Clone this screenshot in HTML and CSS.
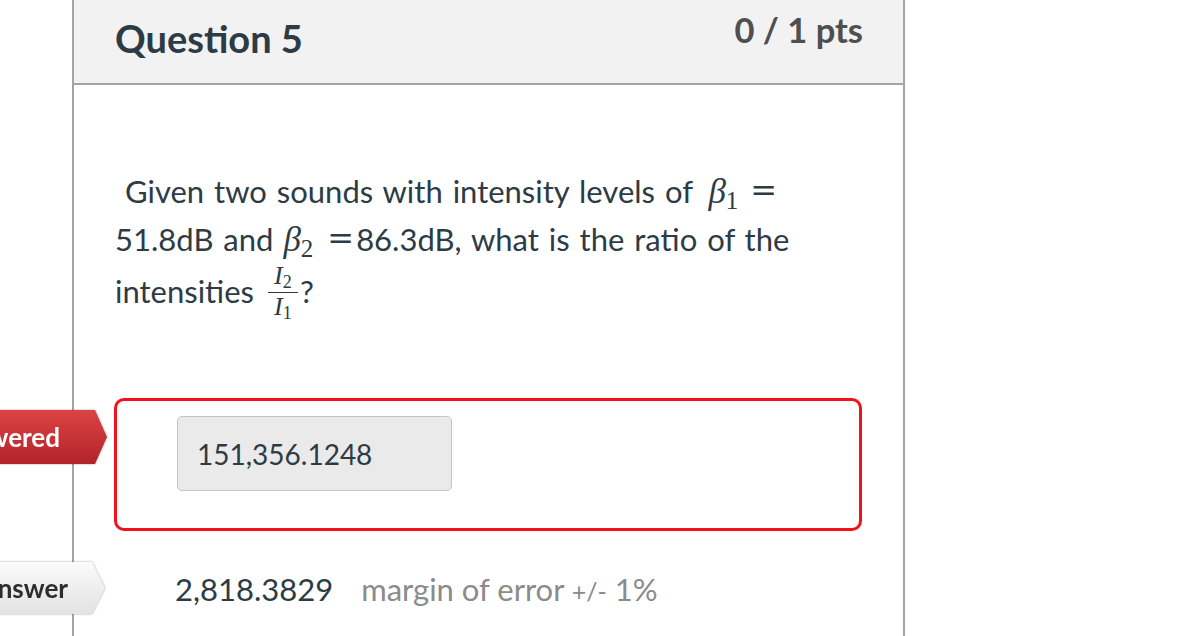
FILE: index.html
```html
<!DOCTYPE html>
<html>
<head>
<meta charset="utf-8">
<link rel="stylesheet" href="styles.css">
</head>
<body>
<div class="page">
  <div class="card">
    <div class="card-header">
      <h2 class="q-title">Question 5</h2>
      <div class="q-points">0 / 1 pts</div>
    </div>
    <div class="card-body">
      <p class="q-text">&nbsp;Given two sounds with intensity levels of <span class="math math-first"><span class="mi">β</span><span class="sub">1</span><span class="mo mo-gap">=</span></span><br>51.8dB and <span class="math"><span class="mi">β</span><span class="sub">2</span><span class="mo mo-gap2">=</span></span>86.3dB, what is the ratio of the<br>intensities <span class="frac"><span class="num"><span class="fi">I</span><span class="fsub">2</span></span><span class="den"><span class="fi">I</span><span class="fsub">1</span></span></span>?</p>

      <div class="answer-row">
        <div class="flag flag-wrong"><span class="flag-shape">You Answered</span></div>
        <div class="answer-box">
          <div class="answer-input">151,356.1248</div>
        </div>
      </div>

      <div class="correct-row">
        <div class="flag flag-correct"><span class="flag-shape">Correct Answer</span></div>
        <span class="correct-value">2,818.3829</span>
        <span class="margin-note">margin of error <span class="pm">+/-</span> 1%</span>
      </div>
    </div>
  </div>
</div>
</body>
</html>
```

FILE: styles.css
```css
* { box-sizing: border-box; }
html, body {
  margin: 0;
  padding: 0;
  background: #ffffff;
}
body {
  font-family: Lato, "Open Sans", "Liberation Sans", sans-serif;
  color: #2d3b45;
}
.page {
  width: 1194px;
  height: 636px;
  overflow: hidden;
}
.card {
  margin-left: 72px;
  width: 833px;
  height: 700px;
  border-left: 2px solid #a5a5a5;
  border-right: 2px solid #a5a5a5;
}
.card-header {
  height: 85px;
  background: #f2f2f2;
  border-bottom: 2px solid #a5a5a5;
  display: flex;
  justify-content: space-between;
  align-items: flex-start;
  padding: 0 40px 0 41px;
}
.q-title {
  margin: 0;
  padding-top: 15px;
  font-size: 38px;
  line-height: 46px;
  font-weight: 700;
  color: #2d3b45;
}
.q-points {
  padding-top: 9px;
  font-size: 34.5px;
  line-height: 42px;
  font-weight: 700;
  color: #4f4f4f;
}
.card-body {
  padding: 82px 40px 0 41px;
}
.q-text {
  margin: 0;
  font-size: 31px;
  line-height: 48px;
  word-spacing: 2px;
  color: #2d3b45;
}
.math {
  font-family: "Liberation Serif", "DejaVu Serif", serif;
  font-size: 35px;
  line-height: 1;
  white-space: nowrap;
  word-spacing: 0;
}
.math-first { margin-left: 6px; }
.mi { font-style: italic; }
.sub {
  font-size: 25px;
  position: relative;
  top: 6px;
}
.mo {
  font-family: "DejaVu Serif", "Liberation Serif", serif;
  font-size: 32px;
  position: relative;
  top: -2px;
}
.mo-gap { margin-left: 12px; }
.mo-gap2 { margin-left: 14px; margin-right: 2px; }
.frac {
  display: inline-flex;
  flex-direction: column;
  align-items: center;
  vertical-align: middle;
  font-family: "Liberation Serif", "DejaVu Serif", serif;
  font-size: 26px;
  line-height: 24px;
  margin: 4px 2px 4px 4px;
  position: relative;
  top: -3px;
}
.num {
  padding: 0 2px 2px;
  border-bottom: 1.5px solid #2d3b45;
  width: 30px;
  text-align: center;
}
.den {
  padding-top: 2px;
  width: 30px;
  text-align: center;
}
.fi { font-style: italic; }
.fsub { font-size: 18px; position: relative; top: 4px; }

.answer-row {
  position: relative;
  margin-top: 70px;
}
.answer-box {
  width: 748px;
  height: 133px;
  margin-left: -1px;
  border: 3px solid #f2111d;
  border-radius: 10px;
  padding: 15px 0 0 60px;
}
.answer-input {
  width: 275px;
  height: 75px;
  background: #eaeaea;
  border: 1.5px solid #c6c6c6;
  border-radius: 5px;
  padding-left: 19px;
  display: flex;
  align-items: center;
  font-size: 28px;
  color: #2d3b45;
}
.flag {
  position: absolute;
  filter: drop-shadow(0 0 0.8px rgba(0,0,0,0.35));
}
.flag-shape {
  display: flex;
  align-items: center;
  justify-content: flex-end;
  width: 200px;
  font-weight: 700;
  font-size: 26px;
  white-space: nowrap;
}
.flag-wrong {
  left: -208px;
  top: 12px;
}
.flag-wrong .flag-shape {
  height: 54px;
  padding-right: 47px;
  color: #ffffff;
  background: linear-gradient(#dc4343, #b3232b);
  clip-path: polygon(0 0, 188px 0, 200px 50%, 188px 100%, 0 100%);
}
.correct-row {
  position: relative;
  margin-top: 30px;
  height: 56px;
  display: flex;
  align-items: center;
  padding-left: 60px;
}
.flag-correct {
  left: -210px;
  top: 1px;
}
.flag-correct .flag-shape {
  height: 52px;
  padding-right: 37px;
  color: #2d2d2d;
  background: linear-gradient(#fbfbfb, #e2e2e2);
  clip-path: polygon(0 0, 187px 0, 200px 50%, 187px 100%, 0 100%);
}
.correct-value {
  font-size: 31px;
  color: #2d3b45;
}
.margin-note {
  margin-left: 28px;
  font-size: 31px;
  color: #8b8b8b;
}
.pm { font-size: 25px; }
```
